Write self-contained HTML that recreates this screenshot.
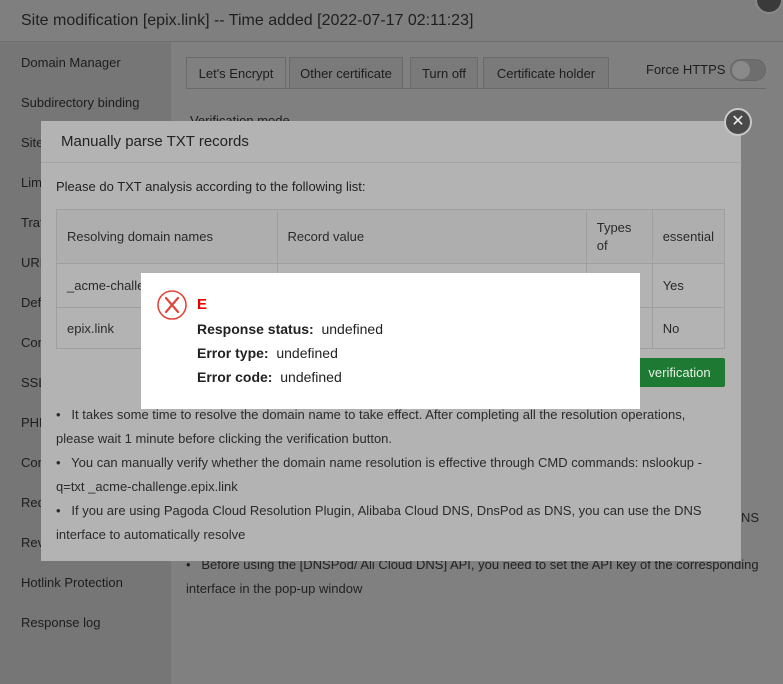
<!DOCTYPE html>
<html><head><style>
*{margin:0;padding:0;box-sizing:border-box}
body{width:783px;height:684px;overflow:hidden;background:#7f7f7f;font-family:"Liberation Sans",sans-serif;position:relative;font-size:13px;color:#222}
.abs{position:absolute}
.hdr{left:0;top:0;width:783px;height:42px;background:#7f7f7f;border-bottom:1px solid #6e6e6e;color:#1f1f1f;font-size:16px;line-height:42px;padding-left:21px}
.side{left:0;top:42px;width:171px;height:642px;background:#767676}
.side div{position:absolute;left:21px;font-size:13px;color:#1d1d1d}
.cont{left:171px;top:42px;width:612px;height:642px;background:#808080}
.tab{position:absolute;top:15px;height:32px;border:1px solid #6a6a6a;border-bottom:none;background:#7a7a7a;font-size:13px;line-height:32px;text-align:center;color:#1d1d1d}
.dlg{left:41px;top:121px;width:700px;height:440px;background:#b3b3b3}
.dlg .h{height:42px;border-bottom:1px solid #a5a5a5;font-size:15px;line-height:42px;padding-left:20px;color:#222}
table{position:absolute;left:15px;top:88px;width:669px;border-collapse:collapse;font-size:13px;color:#2a2a2a}
td{border:1px solid #9f9f9f;padding:0 10px}
.li{position:absolute;left:15px;width:660px;font-size:13px;line-height:24px;color:#2a2a2a}
.err{left:141px;top:273px;width:499px;height:136px;background:#fff}
.err .t{position:absolute;left:56px;font-size:14px;color:#222}
.err b{font-weight:bold}
</style></head><body>
<div class="abs hdr">Site modification [epix.link] -- Time added [2022-07-17 02:11:23]</div>
<div class="abs" style="left:755px;top:-14px;width:28px;height:28px;border-radius:50%;background:#3a3a3a;border:2px solid #888"></div>
<div class="abs side">
<div style="top:13px">Domain Manager</div>
<div style="top:53px">Subdirectory binding</div>
<div style="top:93px">Site</div>
<div style="top:133px">Lim</div>
<div style="top:173px">Traf</div>
<div style="top:213px">URL</div>
<div style="top:253px">Def</div>
<div style="top:293px">Con</div>
<div style="top:333px">SSL</div>
<div style="top:373px">PHP</div>
<div style="top:413px">Con</div>
<div style="top:453px">Red</div>
<div style="top:493px">Rev</div>
<div style="top:533px">Hotlink Protection</div>
<div style="top:573px">Response log</div>
</div>
<div class="abs cont">
<div class="tab" style="left:15px;width:100px;background:#808080">Let's Encrypt</div>
<div class="tab" style="left:118px;width:114px">Other certificate</div>
<div class="tab" style="left:239px;width:68px">Turn off</div>
<div class="tab" style="left:312px;width:126px">Certificate holder</div>
<div style="position:absolute;left:15px;top:46px;width:580px;border-top:1px solid #6a6a6a"></div>
<div style="position:absolute;left:475px;top:20px;font-size:13px;color:#1d1d1d">Force HTTPS</div>
<div style="position:absolute;left:559px;top:17px;width:36px;height:22px;border-radius:11px;background:#6e6e6e;border:1px solid #666"><div style="width:18px;height:18px;border-radius:50%;background:#8a8a8a;margin:1px"></div></div>
<div style="position:absolute;left:19px;top:71px;font-size:13px;color:#1d1d1d">Verification mode</div>
<div style="position:absolute;left:15px;top:511px;font-size:13px;line-height:24px;color:#222;width:590px">•&nbsp;&nbsp; Before using the [DNSPod/ Ali Cloud DNS] API, you need to set the API key of the corresponding interface in the pop-up window</div>
<div style="position:absolute;left:570px;top:468px;font-size:13px;color:#222">NS</div>
</div>
<div class="abs dlg">
<div class="h">Manually parse TXT records</div>
<div style="position:absolute;left:15px;top:58px;font-size:13px;color:#222">Please do TXT analysis according to the following list:</div>
<table>
<tr style="height:54px;background:#aeaeae"><td style="width:221px">Resolving domain names</td><td style="width:310px">Record value</td><td style="width:66px;line-height:18px">Types<br>of</td><td>essential</td></tr>
<tr style="height:44px"><td>_acme-challe</td><td></td><td></td><td>Yes</td></tr>
<tr style="height:41px"><td>epix.link</td><td></td><td></td><td>No</td></tr>
</table>
<div style="position:absolute;left:593px;top:237px;width:91px;height:29px;background:#1e7a32;color:#e8f0e8;font-size:13px;line-height:29px;text-align:center;border-radius:2px">verification</div>
<div class="li" style="top:282px">•&nbsp;&nbsp; It takes some time to resolve the domain name to take effect. After completing all the resolution operations, please wait 1 minute before clicking the verification button.</div>
<div class="li" style="top:330px">•&nbsp;&nbsp; You can manually verify whether the domain name resolution is effective through CMD commands: nslookup -q=txt _acme-challenge.epix.link</div>
<div class="li" style="top:378px">•&nbsp;&nbsp; If you are using Pagoda Cloud Resolution Plugin, Alibaba Cloud DNS, DnsPod as DNS, you can use the DNS interface to automatically resolve</div>
</div>
<div class="abs" style="left:724px;top:108px;width:28px;height:28px;border-radius:50%;background:#4a4a4a;border:2px solid #c8c8c8;color:#eee;font-size:16px;line-height:23px;text-align:center">✕</div>
<div class="abs err">
<svg style="position:absolute;left:15px;top:16px" width="32" height="32" viewBox="0 0 32 32"><circle cx="16" cy="16" r="14" fill="none" stroke="#e0453a" stroke-width="1.6"/><path d="M10 9L22 23M22 9L10 23" stroke="#e0453a" stroke-width="2.2" stroke-linecap="round"/></svg>
<div class="t" style="top:23px;color:#e00;font-weight:bold;font-size:15px">E</div>
<div class="t" style="top:48px"><b>Response status:</b>&nbsp; undefined</div>
<div class="t" style="top:72px"><b>Error type:</b>&nbsp; undefined</div>
<div class="t" style="top:96px"><b>Error code:</b>&nbsp; undefined</div>
</div>
</body></html>
